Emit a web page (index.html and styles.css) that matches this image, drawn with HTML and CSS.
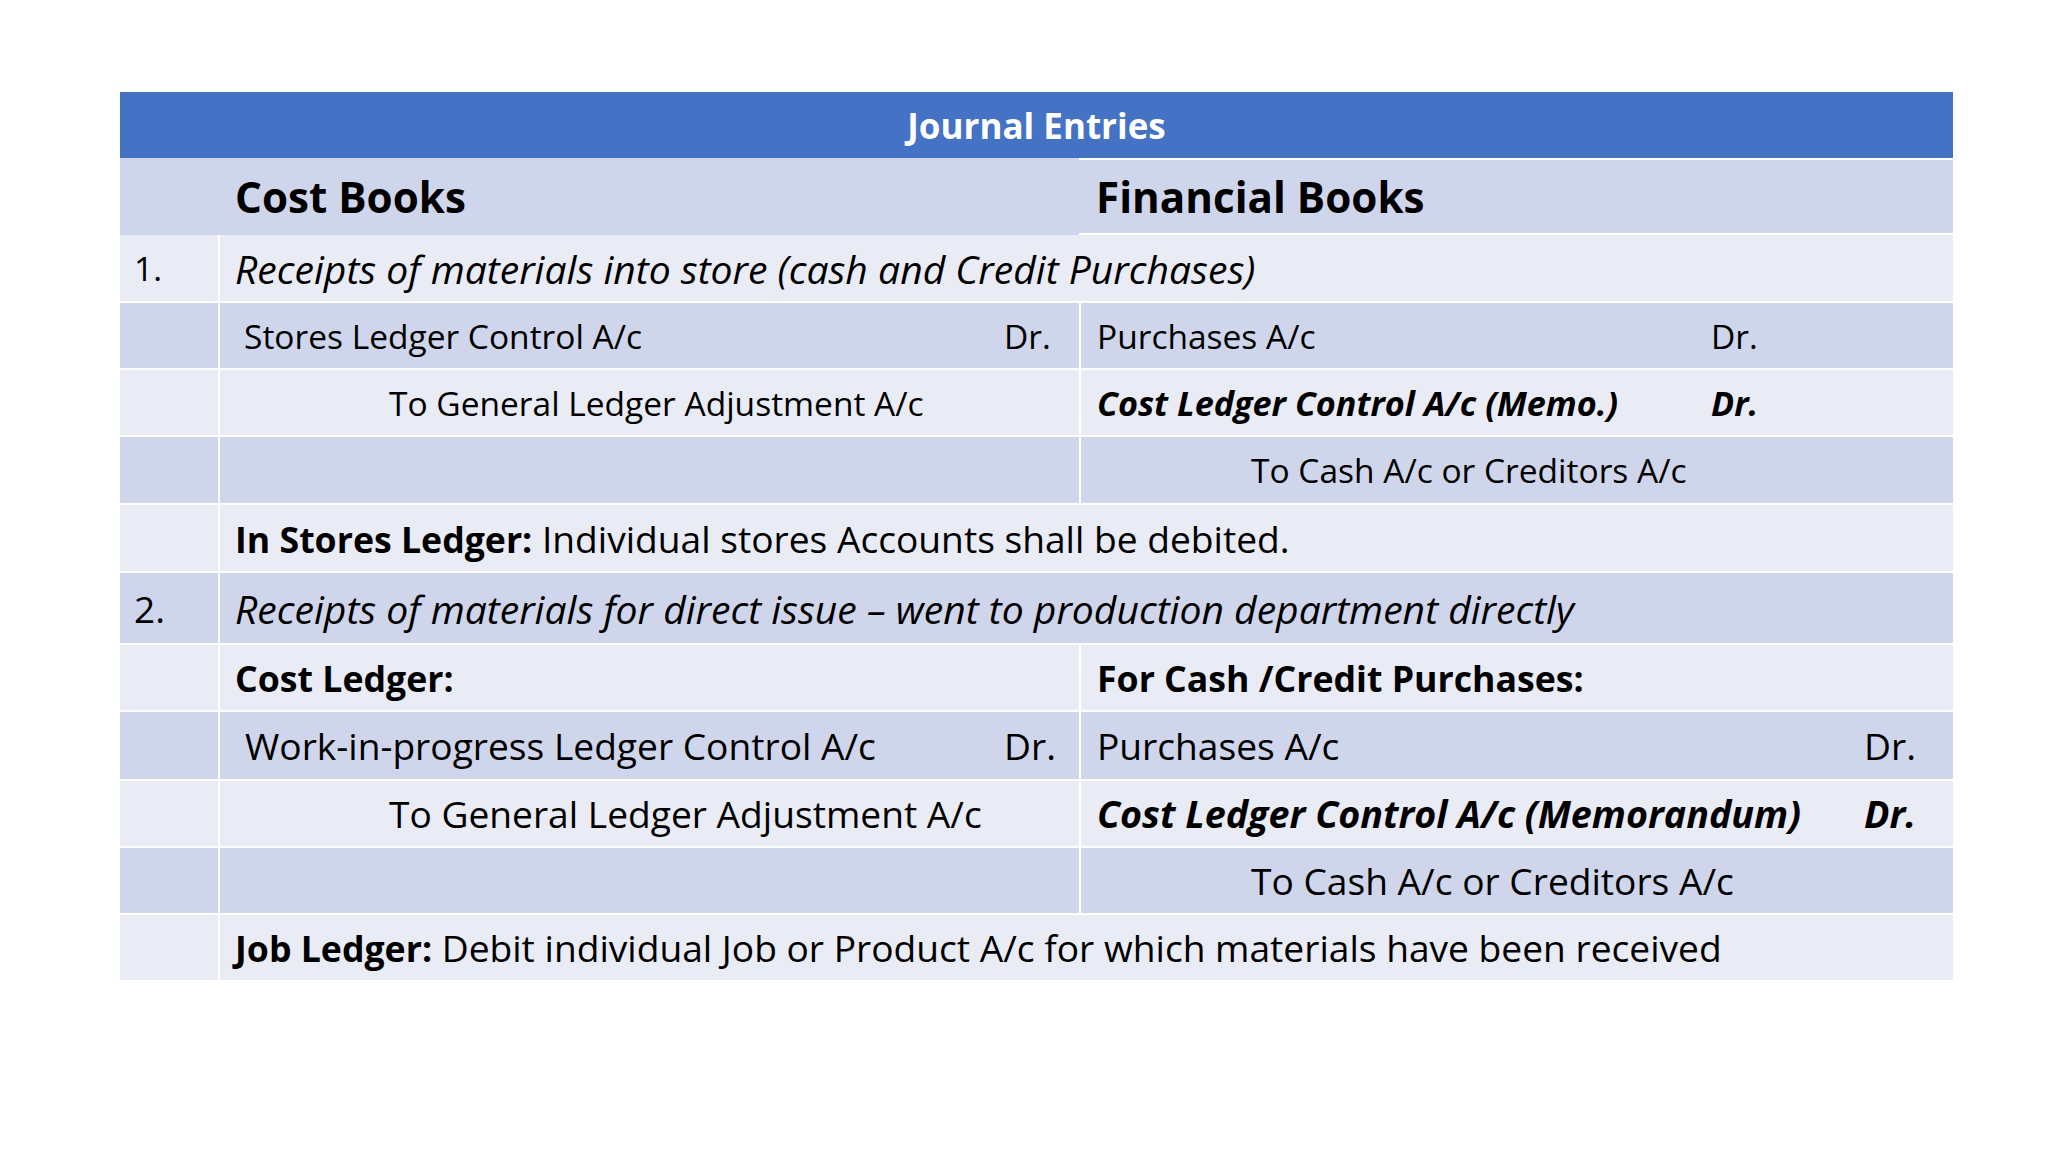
FILE: index.html
```html
<!DOCTYPE html>
<html lang="en">
<head>
<meta charset="utf-8">
<title>Journal Entries</title>
<link rel="stylesheet" href="styles.css">
</head>
<body>
<main class="slide">
  <section class="journal">
    <div class="title">Journal Entries</div>
    <div class="head">
      <div class="head-cost">Cost Books</div>
      <div class="head-fin">Financial Books</div>
    </div>
    <div class="grid">
      <div class="row light">
        <div class="cell num s1">1.</div>
        <div class="cell span italic si">Receipts of materials into store (cash and Credit Purchases)</div>
      </div>
      <div class="row dark">
        <div class="cell num"></div>
        <div class="cell s1"><div class="tab tab-l"><span class="lead">Stores Ledger Control A/c</span><span>Dr.</span></div></div>
        <div class="cell s1"><div class="tab tab-r1"><span>Purchases A/c</span><span>Dr.</span></div></div>
      </div>
      <div class="row light">
        <div class="cell num"></div>
        <div class="cell s1"><span class="indent">To General Ledger Adjustment A/c</span></div>
        <div class="cell s1 bi"><div class="tab tab-r1"><span>Cost Ledger Control A/c (Memo.)</span><span>Dr.</span></div></div>
      </div>
      <div class="row dark">
        <div class="cell num"></div>
        <div class="cell s1"></div>
        <div class="cell s1"><span class="indent">To Cash A/c or Creditors A/c</span></div>
      </div>
      <div class="row light">
        <div class="cell num"></div>
        <div class="cell span s2"><span><b class="label">In Stores Ledger:</b> Individual stores Accounts shall be debited.</span></div>
      </div>
      <div class="row dark">
        <div class="cell num s2">2.</div>
        <div class="cell span italic si">Receipts of materials for direct issue – went to production department directly</div>
      </div>
      <div class="row light">
        <div class="cell num"></div>
        <div class="cell s2"><b class="label">Cost Ledger:</b></div>
        <div class="cell s2"><b class="label">For Cash /Credit Purchases:</b></div>
      </div>
      <div class="row dark">
        <div class="cell num"></div>
        <div class="cell s2"><div class="tab tab-l"><span class="lead">Work-in-progress Ledger Control A/c</span><span>Dr.</span></div></div>
        <div class="cell s2"><div class="tab tab-r2"><span>Purchases A/c</span><span>Dr.</span></div></div>
      </div>
      <div class="row light">
        <div class="cell num"></div>
        <div class="cell s2"><span class="indent">To General Ledger Adjustment A/c</span></div>
        <div class="cell s2 bi"><div class="tab tab-r2"><span>Cost Ledger Control A/c (Memorandum)</span><span>Dr.</span></div></div>
      </div>
      <div class="row dark">
        <div class="cell num"></div>
        <div class="cell s2"></div>
        <div class="cell s2"><span class="indent">To Cash A/c or Creditors A/c</span></div>
      </div>
      <div class="row light">
        <div class="cell num"></div>
        <div class="cell span s2"><span><b class="label">Job Ledger:</b> Debit individual Job or Product A/c for which materials have been received</span></div>
      </div>
    </div>
  </section>
</main>
</body>
</html>
```

FILE: styles.css
```css
html, body {
  margin: 0;
  padding: 0;
  background: #ffffff;
}

body {
  font-family: "Open Sans", "Noto Sans", "Liberation Sans", sans-serif;
  color: #000000;
}

.slide {
  width: 2048px;
  height: 1152px;
  padding: 92px 0 0 120px;
  box-sizing: border-box;
}

.journal {
  width: 1833px;
}

.title {
  height: 66px;
  background: #4472c4;
  color: #ffffff;
  font-weight: 700;
  font-size: 35px;
  display: flex;
  align-items: center;
  justify-content: center;
}

.head {
  display: flex;
  height: 77px;
  background: #cfd5ea;
  font-weight: 700;
  font-size: 42.2px;
}

.head-cost {
  width: 959px;
  padding-left: 115px;
  box-sizing: border-box;
  display: flex;
  align-items: center;
}

.head-fin {
  flex: 1;
  padding-left: 17px;
  border-top: 2px solid #ffffff;
  border-bottom: 2px solid #ffffff;
  display: flex;
  align-items: center;
}

.grid {
  display: grid;
  grid-template-columns: 98px 859px 872px;
  grid-template-rows: 66px 65px 65px 66px 66px 70px 65px 67px 65px 65px 65px;
  gap: 2px;
  background: #ffffff;
}

.row {
  display: contents;
}

.row.dark > .cell {
  background: #cfd5ea;
}

.row.light > .cell {
  background: #e9ebf5;
}

.cell {
  display: flex;
  align-items: center;
  padding-left: 15px;
  white-space: nowrap;
  min-width: 0;
}

.cell:nth-child(3) {
  padding-left: 16px;
}

.cell.num {
  padding-left: 14px;
}

.cell.span {
  grid-column: 2 / 4;
}

.s1 {
  font-size: 33.5px;
}

.s2 {
  font-size: 37.15px;
}

.si {
  font-size: 39.1px;
  font-style: italic;
}

.s1.bi {
  font-size: 34.2px;
}

.s2.bi {
  font-size: 37.7px;
}

.bi {
  font-weight: 700;
  font-style: italic;
}

.label {
  font-weight: 700;
  font-size: 0.96em;
}

.tab {
  display: grid;
  align-items: center;
}

.tab-l {
  grid-template-columns: 769px auto;
}

.tab-r1 {
  grid-template-columns: 614px auto;
}

.tab-r2 {
  grid-template-columns: 767px auto;
}

.lead {
  padding-left: 0.27em;
}

.indent {
  padding-left: 154px;
}
```
